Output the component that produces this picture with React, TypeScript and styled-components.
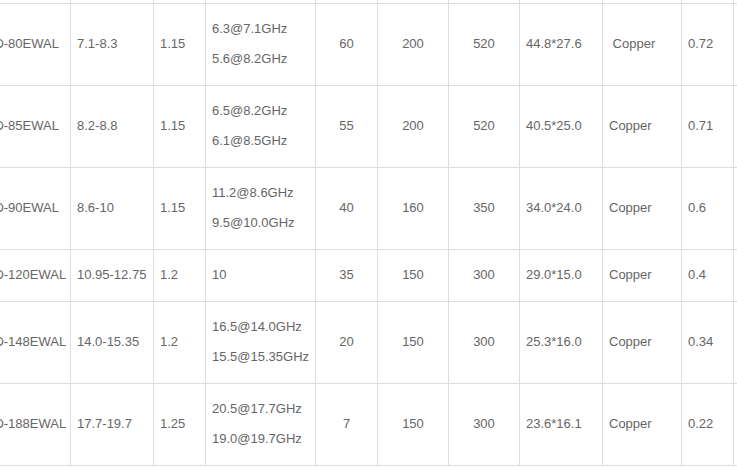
import styled, { createGlobalStyle } from "styled-components";

const GlobalStyle = createGlobalStyle`
  html, body {
    margin: 0;
    padding: 0;
    background: #fff;
  }
`;

const Viewport = styled.div`
  width: 737px;
  height: 468px;
  overflow: hidden;
  background: #fff;
`;

const SpecTable = styled.table`
  border-collapse: collapse;
  table-layout: fixed;
  width: 835px;
  margin: -79.5px 0 0 -22px;
  font-family: "Liberation Sans", Arial, sans-serif;
  font-size: 13px;
  color: #666;
`;

const Cell = styled.td<{ $align?: "left" | "center" }>`
  border: 1px solid #ddd;
  padding: 10.5px 6px;
  line-height: 30px;
  text-align: ${(p) => p.$align ?? "left"};
  vertical-align: middle;
  white-space: nowrap;
`;

const Line = styled.span`
  display: block;
`;

type Row = {
  model: string;
  band: string;
  vswr: string;
  gain: string[];
  a: string;
  b: string;
  c: string;
  size: string;
  material: string;
  weight: string;
};

const blank = "\u00a0";

// first row sits above the window; only its bottom border shows
const rows: Row[] = [
  { model: "", band: "", vswr: "", gain: [blank, blank], a: "", b: "", c: "", size: "", material: "", weight: "" },
  { model: "HD-80EWAL", band: "7.1-8.3", vswr: "1.15", gain: ["6.3@7.1GHz", "5.6@8.2GHz"], a: "60", b: "200", c: "520", size: "44.8*27.6", material: "\u00a0Copper", weight: "0.72" },
  { model: "HD-85EWAL", band: "8.2-8.8", vswr: "1.15", gain: ["6.5@8.2GHz", "6.1@8.5GHz"], a: "55", b: "200", c: "520", size: "40.5*25.0", material: "Copper", weight: "0.71" },
  { model: "HD-90EWAL", band: "8.6-10", vswr: "1.15", gain: ["11.2@8.6GHz", "9.5@10.0GHz"], a: "40", b: "160", c: "350", size: "34.0*24.0", material: "Copper", weight: "0.6" },
  { model: "HD-120EWAL", band: "10.95-12.75", vswr: "1.2", gain: ["10"], a: "35", b: "150", c: "300", size: "29.0*15.0", material: "Copper", weight: "0.4" },
  { model: "HD-148EWAL", band: "14.0-15.35", vswr: "1.2", gain: ["16.5@14.0GHz", "15.5@15.35GHz"], a: "20", b: "150", c: "300", size: "25.3*16.0", material: "Copper", weight: "0.34" },
  { model: "HD-188EWAL", band: "17.7-19.7", vswr: "1.25", gain: ["20.5@17.7GHz", "19.0@19.7GHz"], a: "7", b: "150", c: "300", size: "23.6*16.1", material: "Copper", weight: "0.22" },
];

const widths = [92, 83, 52, 110, 62, 71, 71, 83, 79, 52, 80];

export default function App() {
  return (
    <Viewport>
      <GlobalStyle />
      <SpecTable>
        <colgroup>
          {widths.map((w, i) => (
            <col key={i} style={{ width: w }} />
          ))}
        </colgroup>
        <tbody>
          {rows.map((r, i) => (
            <tr key={i}>
              <Cell>{r.model}</Cell>
              <Cell>{r.band}</Cell>
              <Cell>{r.vswr}</Cell>
              <Cell>
                {r.gain.map((g, j) => (
                  <Line key={j}>{g}</Line>
                ))}
              </Cell>
              <Cell $align="center">{r.a}</Cell>
              <Cell $align="center">{r.b}</Cell>
              <Cell $align="center">{r.c}</Cell>
              <Cell>{r.size}</Cell>
              <Cell>{r.material}</Cell>
              <Cell>{r.weight}</Cell>
              <Cell />
            </tr>
          ))}
        </tbody>
      </SpecTable>
    </Viewport>
  );
}
